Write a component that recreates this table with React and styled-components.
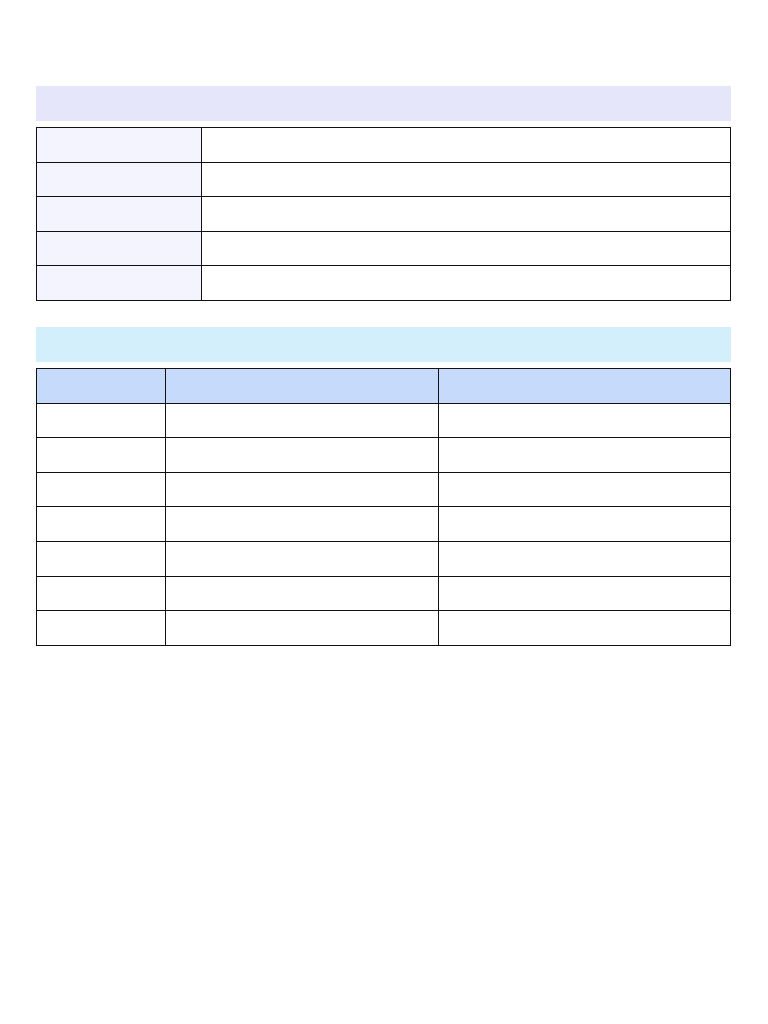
import styled, { createGlobalStyle } from "styled-components";

const GlobalStyle = createGlobalStyle`
  html, body {
    margin: 0;
    padding: 0;
    background: #fff;
    font-family: "Liberation Sans", Arial, sans-serif;
  }
`;

const Page = styled.div`
  padding: 86px 37px 0 36px;
  display: flex;
  flex-direction: column;
`;

const Section = styled.section`
  display: flex;
  flex-direction: column;
  margin-bottom: 26px;
`;

const SectionBar = styled.div`
  height: 35px;
  background: ${({ $tone }) => $tone};
  margin-bottom: 6px;
`;

const Table = styled.table`
  width: 100%;
  border-collapse: collapse;
  table-layout: fixed;
  border: 1.5px solid #333;
`;

const Row = styled.tr`
  height: 34.6px;
`;

const Cell = styled.td`
  border: 1px solid #111;
  padding: 0;
  background: ${({ $bg }) => $bg || "#fff"};
`;

const HeadCell = styled.th`
  border: 1px solid #111;
  padding: 0;
  background: #c6dbfc;
`;

function InfoTable() {
  return (
    <Table>
      <colgroup>
        <col style={{ width: 165 }} />
        <col />
      </colgroup>
      <tbody>
        {Array.from({ length: 5 }).map((_, i) => (
          <Row key={i}>
            <Cell $bg="#f4f4ff" />
            <Cell />
          </Row>
        ))}
      </tbody>
    </Table>
  );
}

function ListTable() {
  return (
    <Table>
      <colgroup>
        <col style={{ width: 129 }} />
        <col style={{ width: 273 }} />
        <col />
      </colgroup>
      <thead>
        <Row>
          <HeadCell />
          <HeadCell />
          <HeadCell />
        </Row>
      </thead>
      <tbody>
        {Array.from({ length: 7 }).map((_, i) => (
          <Row key={i}>
            <Cell />
            <Cell />
            <Cell />
          </Row>
        ))}
      </tbody>
    </Table>
  );
}

export default function App() {
  return (
    <>
      <GlobalStyle />
      <Page>
        <Section>
          <SectionBar $tone="#e5e6fa" />
          <InfoTable />
        </Section>
        <Section>
          <SectionBar $tone="#d3effc" />
          <ListTable />
        </Section>
      </Page>
    </>
  );
}
